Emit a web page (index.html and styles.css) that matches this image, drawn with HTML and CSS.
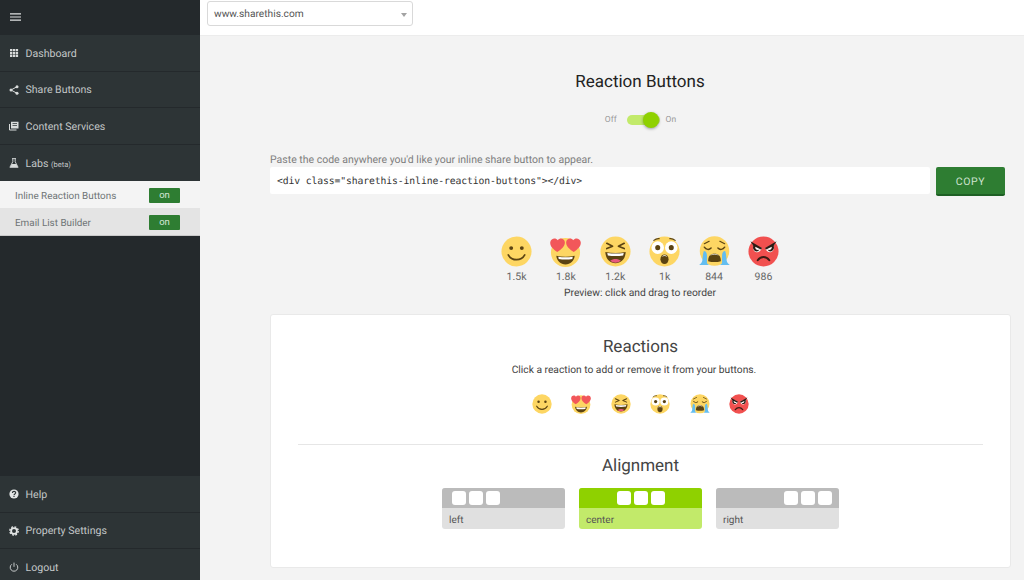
FILE: index.html
```html
<!DOCTYPE html>
<html lang="en">
<head>
<meta charset="utf-8">
<title>Reaction Buttons</title>
<link rel="stylesheet" href="styles.css">
</head>
<body>
<svg class="defs" width="0" height="0" aria-hidden="true">
  <defs>
    <symbol id="e-smile" viewBox="0 0 32 32">
      <circle cx="16" cy="16" r="15.500" fill="#fdd663"/>
      <circle cx="10.500" cy="12.500" r="2" fill="#5b4312"/>
      <circle cx="21.500" cy="12.500" r="2" fill="#5b4312"/>
      <path d="M7.500 19.500c2 3.600 4.900 5 8.500 5s6.500-1.400 8.500-5" fill="none" stroke="#5b4312" stroke-width="1.800" stroke-linecap="round"/>
    </symbol>
    <symbol id="e-love" viewBox="0 0 32 32">
      <circle cx="16" cy="17" r="15" fill="#fdd663"/>
      <path d="M7.500 16.500C3 13.500-.3 10.300.3 6.300 1 2.300 6 1.300 8 4.500c2-3.200 6.800-2.200 7.300 1.800.4 4-3.300 7.200-7.800 10.200z" fill="#f2575a"/>
      <path d="M24.500 16.500c-4.500-3-8.200-6.200-7.800-10.200.5-4 5.300-5 7.300-1.800 2-3.200 7-2.200 7.700 1.800.6 4-2.700 7.200-7.200 10.200z" fill="#f2575a"/>
      <path d="M6.500 20.500c6 1.300 13 1.300 19 0-.5 5.500-4.500 9-9.500 9s-9-3.500-9.500-9z" fill="#5b4312"/>
      <path d="M8.500 21.300c5 .8 10 .8 15 0l-.5 2.500c-4.500.7-9.500.7-14 0z" fill="#fff"/>
    </symbol>
    <symbol id="e-laugh" viewBox="0 0 32 32">
      <circle cx="16" cy="16" r="15.500" fill="#fdd663"/>
      <path d="M7 7.500l6 3-6 2.500M25 7.500l-6 3 6 2.500" fill="none" stroke="#5b4312" stroke-width="1.700" stroke-linecap="round" stroke-linejoin="round"/>
      <path d="M5.500 16.500c7 1.500 14 1.500 21 0-.3 7.500-4.800 11.500-10.500 11.500S5.800 24 5.500 16.500z" fill="#5b4312"/>
      <path d="M7.500 17.500c5.500.8 11.500.8 17 0l-.6 2.600c-5 .7-10.800.7-15.800 0z" fill="#fff"/>
      <path d="M10.500 25.500c3-2.200 8-2.200 11 0-3 2.700-8 2.700-11 0z" fill="#e8587c"/>
    </symbol>
    <symbol id="e-wow" viewBox="0 0 32 32">
      <circle cx="16" cy="16" r="15.500" fill="#fdd663"/>
      <path d="M5 4.500c1.500-1.300 3.500-2 5.500-1.800M27 4.500c-1.500-1.300-3.500-2-5.500-1.800" fill="none" stroke="#5b4312" stroke-width="1.200" stroke-linecap="round"/>
      <circle cx="9" cy="12" r="6.500" fill="#fff"/>
      <circle cx="23" cy="12" r="6.500" fill="#fff"/>
      <circle cx="9" cy="12" r="2.600" fill="#5b4312"/>
      <circle cx="23" cy="12" r="2.600" fill="#5b4312"/>
      <ellipse cx="16" cy="24" rx="4.200" ry="5" fill="#5b4312"/>
      <path d="M13 21.500c2-1.200 4-1.200 6 0-1.600-2.300-4.400-2.300-6 0z" fill="#fff"/>
    </symbol>
    <symbol id="e-cry" viewBox="0 0 32 32">
      <circle cx="16" cy="15.500" r="15.200" fill="#fdd663"/>
      <path d="M5.500 8l5-2.500M26.500 8l-5-2.500" fill="none" stroke="#5b4312" stroke-width="1.200" stroke-linecap="round"/>
      <path d="M5.500 11.500c1.800 2.800 5 3 7 1M26.500 11.500c-1.800 2.800-5 3-7 1" fill="none" stroke="#5b4312" stroke-width="1.500" stroke-linecap="round"/>
      <path d="M9.500 26c-.4-5 2.600-8 6.500-8s6.900 3 6.500 8c-4 1.200-9 1.200-13 0z" fill="#5b4312"/>
      <path d="M11.500 20.500c2.800-1.700 6.200-1.700 9 0-2-3-7-3-9 0z" fill="#fff"/>
      <path d="M5 15.500c2 0 3.200 2 3.200 5v6.500c0 1.500 1 2 2.300 3H.2c1.700-1.500 3-2.500 3.300-5 .4-3 .3-6.700 1.500-9.500z" fill="#63bdf0"/>
      <path d="M27 15.500c-2 0-3.200 2-3.200 5v6.500c0 1.500-1 2-2.300 3h10.300c-1.700-1.500-3-2.500-3.300-5-.4-3-.3-6.700-1.500-9.500z" fill="#63bdf0"/>
    </symbol>
    <symbol id="e-angry" viewBox="0 0 32 32">
      <circle cx="16" cy="16" r="15.500" fill="#f1504f"/>
      <path d="M3.500 7l10.500 5.500c-.5 3-2.500 4.500-5 4.200C6 16.300 4.500 13 5.500 10z" fill="#fff"/>
      <path d="M28.500 7L18 12.500c.5 3 2.500 4.500 5 4.200 3-.4 4.500-3.700 3.500-6.700z" fill="#fff"/>
      <path d="M2.500 5.500l12 6.800-1.200 1.600-5.800-2.900c-.6 2.700 2.900 4.500 4.400 2.800-.6 2.200-3.500 2.800-5.300 1.200-1.400-1.200-1.700-3-1.200-5z" fill="#2a1b14"/>
      <path d="M29.500 5.500l-12 6.800 1.200 1.600 5.800-2.900c.6 2.700-2.900 4.500-4.400 2.800.6 2.200 3.500 2.800 5.300 1.200 1.400-1.200 1.700-3 1.200-5z" fill="#2a1b14"/>
      <path d="M10 25c3.200-4.500 8.800-4.500 12 0" fill="none" stroke="#3b1c14" stroke-width="2" stroke-linecap="round"/>
    </symbol>
  </defs>
</svg>

<div class="app">
  <aside class="sidebar">
    <div class="side-top">
      <svg class="ico-menu" viewBox="0 0 11 8"><path d="M0 .8h11M0 4h11M0 7.200h11" stroke="#dfe2e2" stroke-width="1.200"/></svg>
    </div>
    <a class="nav-row">
      <svg class="ico" viewBox="0 0 10 10"><path fill="#d8dbdb" d="M1 1h2.300v2.300H1zM3.900 1h2.300v2.300H3.900zM6.800 1h2.300v2.300H6.800zM1 3.900h2.300v2.300H1zM3.900 3.900h2.300v2.300H3.900zM6.800 3.900h2.300v2.300H6.800zM1 6.800h2.300v2.300H1zM3.900 6.800h2.300v2.300H3.900zM6.800 6.800h2.300v2.300H6.800z"/></svg>
      <span>Dashboard</span>
    </a>
    <a class="nav-row">
      <svg class="ico" viewBox="0 0 10 10"><path d="M8 1.700L2 5l6 3.300" fill="none" stroke="#d8dbdb" stroke-width="1"/><circle cx="8" cy="1.700" r="1.500" fill="#d8dbdb"/><circle cx="2" cy="5" r="1.500" fill="#d8dbdb"/><circle cx="8" cy="8.300" r="1.500" fill="#d8dbdb"/></svg>
      <span>Share Buttons</span>
    </a>
    <a class="nav-row">
      <svg class="ico" viewBox="0 0 10 10"><path d="M.5 3v6h7" fill="none" stroke="#d8dbdb" stroke-width="1"/><path fill="#d8dbdb" fill-rule="evenodd" d="M2 .8h7.500v6.700H2zM3.500 2.300v.8h4.500v-.8zM3.500 4v.8h4.500V4z"/></svg>
      <span>Content Services</span>
    </a>
    <a class="nav-row nav-labs">
      <svg class="ico" viewBox="0 0 10 10"><path d="M3 .6h4M3.800.6v3.100L.9 9.300h8.200L6.200 3.700V.6" fill="none" stroke="#d8dbdb" stroke-width=".9"/><path d="M2.700 6h4.600l1.500 3.200H1.200z" fill="#d8dbdb"/></svg>
      <span>Labs <small>(beta)</small></span>
    </a>
    <div class="sub-row">
      <span>Inline Reaction Buttons</span>
      <b class="pill">on</b>
    </div>
    <div class="sub-row sub-alt">
      <span>Email List Builder</span>
      <b class="pill">on</b>
    </div>
    <div class="side-space"></div>
    <a class="nav-row">
      <svg class="ico" viewBox="0 0 10 10"><circle cx="5" cy="5" r="4.600" fill="#e2e5e5"/><path d="M3.400 3.900c0-2 3.300-2 3.300-.1 0 1.200-1.700 1.200-1.700 2.400" fill="none" stroke="#2d3436" stroke-width="1.100"/><path d="M4.400 6.900h1.200v1.200H4.400z" fill="#2d3436"/></svg>
      <span>Help</span>
    </a>
    <a class="nav-row">
      <svg class="ico" viewBox="0 0 10 10"><circle cx="5" cy="5" r="2.900" fill="none" stroke="#e2e5e5" stroke-width="1.800"/><circle cx="5" cy="5" r="4.200" fill="none" stroke="#e2e5e5" stroke-width="1.400" stroke-dasharray="1.800 1.500"/></svg>
      <span>Property Settings</span>
    </a>
    <a class="nav-row">
      <svg class="ico" viewBox="0 0 10 10"><path d="M2.800 2.300a3.800 3.800 0 1 0 4.400 0" fill="none" stroke="#d8dbdb" stroke-width=".9"/><path d="M5 .6v4.200" stroke="#d8dbdb" stroke-width=".9"/></svg>
      <span>Logout</span>
    </a>
  </aside>

  <main class="main">
    <header class="topbar">
      <div class="select">
        <span>www.sharethis.com</span>
        <i class="caret"></i>
      </div>
    </header>

    <section class="content">
      <h1 class="title">Reaction Buttons</h1>

      <div class="toggle-row">
        <span>Off</span>
        <div class="toggle"><i class="knob"></i></div>
        <span>On</span>
      </div>

      <p class="hint">Paste the code anywhere you'd like your inline share button to appear.</p>
      <div class="code-row">
        <code class="code">&lt;div class="sharethis-inline-reaction-buttons"&gt;&lt;/div&gt;</code>
        <button class="copy">COPY</button>
      </div>

      <div class="preview">
        <div class="react"><svg class="emoji-lg"><use href="#e-smile"/></svg><span>1.5k</span></div>
        <div class="react"><svg class="emoji-lg"><use href="#e-love"/></svg><span>1.8k</span></div>
        <div class="react"><svg class="emoji-lg"><use href="#e-laugh"/></svg><span>1.2k</span></div>
        <div class="react"><svg class="emoji-lg"><use href="#e-wow"/></svg><span>1k</span></div>
        <div class="react"><svg class="emoji-lg"><use href="#e-cry"/></svg><span>844</span></div>
        <div class="react"><svg class="emoji-lg"><use href="#e-angry"/></svg><span>986</span></div>
      </div>
      <p class="preview-note">Preview: click and drag to reorder</p>

      <div class="card">
        <h2 class="card-title">Reactions</h2>
        <p class="card-sub">Click a reaction to add or remove it from your buttons.</p>
        <div class="picker">
          <svg class="emoji-sm"><use href="#e-smile"/></svg>
          <svg class="emoji-sm"><use href="#e-love"/></svg>
          <svg class="emoji-sm"><use href="#e-laugh"/></svg>
          <svg class="emoji-sm"><use href="#e-wow"/></svg>
          <svg class="emoji-sm"><use href="#e-cry"/></svg>
          <svg class="emoji-sm"><use href="#e-angry"/></svg>
        </div>
        <hr class="rule">
        <h2 class="card-title align-title">Alignment</h2>
        <div class="aligns">
          <div class="align">
            <div class="align-top"><i></i><i></i><i></i></div>
            <div class="align-label">left</div>
          </div>
          <div class="align align-on">
            <div class="align-top top-center"><i></i><i></i><i></i></div>
            <div class="align-label">center</div>
          </div>
          <div class="align">
            <div class="align-top top-right"><i></i><i></i><i></i></div>
            <div class="align-label">right</div>
          </div>
        </div>
      </div>
    </section>
  </main>
</div>
</body>
</html>
```

FILE: styles.css
```css
* { box-sizing: border-box; }

html, body {
  margin: 0;
  height: 580px;
  overflow: hidden;
}

body {
  font-family: Roboto, "Liberation Sans", sans-serif;
  background: #f3f3f3;
  color: #444;
  text-rendering: geometricPrecision;
}

.defs { position: absolute; }

.app {
  display: flex;
  width: 1024px;
  height: 580px;
  overflow: hidden;
}

/* Sidebar */
.sidebar {
  flex: 0 0 200px;
  display: flex;
  flex-direction: column;
  background: #24292c;
  overflow: hidden;
}

.side-top {
  flex: 0 0 35px;
  display: flex;
  align-items: center;
  padding-left: 10px;
}

.ico-menu { width: 11px; height: 8px; margin-top: -1px; }

.nav-row {
  flex: 0 0 36.5px;
  display: flex;
  align-items: center;
  gap: 6.500px;
  padding: .6px 0 0 9px;
  background: #2d3436;
  border-bottom: 1px solid #24292c;
  color: #c3c7c8;
  font-size: 10.600px;
}

.nav-labs { border-bottom: 0; }

.nav-row small { font-size: 7.500px; }

.ico { width: 10px; height: 10px; flex: none; }

.sub-row {
  flex: 0 0 27px;
  display: flex;
  align-items: center;
  justify-content: space-between;
  padding: 1px 20px 0 15px;
  background: #f4f4f4;
  color: #6f7476;
  font-size: 9.900px;
}

.sub-row span { padding-top: 2px; }

.sub-alt {
  flex-basis: 28px;
  background: #e4e4e4;
  border-bottom: 1px solid #c9c9c9;
}

.pill {
  width: 31px;
  height: 15px;
  border-radius: 1px;
  background: #2e7d32;
  color: #d7e8d8;
  font-size: 9.500px;
  font-weight: 400;
  line-height: 15px;
  text-align: center;
}

.side-space { flex: 0 0 240px; }

/* Main */
.main {
  flex: 1;
  display: flex;
  flex-direction: column;
  min-width: 0;
}

.topbar {
  flex: 0 0 36px;
  padding: 1px 0 0 7px;
  background: #fff;
  border-bottom: 1px solid #ececec;
}

.select {
  width: 206px;
  height: 25px;
  display: flex;
  align-items: center;
  justify-content: space-between;
  padding: 1px 5px 0 6px;
  background: #fff;
  border: 1px solid #d9d9d9;
  border-radius: 3px;
  color: #555;
  font-size: 10.200px;
}

.caret {
  width: 0;
  height: 0;
  margin: 2px 0 0;
  border-left: 3.500px solid transparent;
  border-right: 3.500px solid transparent;
  border-top: 4px solid #a3a3a3;
}

.content {
  flex: 1;
  padding: 0 13px 0 70px;
}

.title {
  margin: 36px 0 0;
  font-size: 17px;
  font-weight: 400;
  line-height: 21px;
  color: #222;
  text-align: center;
  padding-right: 1px;
}

.toggle-row {
  display: flex;
  align-items: center;
  justify-content: center;
  height: 18px;
  margin-top: 18px;
  color: #9a9a9a;
  font-size: 8.500px;
}

.toggle {
  position: relative;
  width: 33px;
  height: 10px;
  margin: 0 6px 0 10px;
  border-radius: 5px;
  background: #c2ea6a;
}

.knob {
  position: absolute;
  top: -3px;
  right: 1px;
  width: 16px;
  height: 16px;
  border-radius: 50%;
  background: #8fd100;
  box-shadow: 0 1px 3px rgba(0, 0, 0, .35);
}

.hint {
  margin: 24px 0 0;
  color: #7d7d7d;
  font-size: 10.500px;
  line-height: 14px;
}

.code-row {
  display: flex;
  gap: 6px;
  margin: 0 6px 0 0;
  align-items: flex-start;
}

.code {
  flex: 1;
  height: 27px;
  padding-left: 7px;
  background: #fff;
  border-radius: 2px;
  color: #333;
  font-family: "DejaVu Sans Mono", "Liberation Mono", monospace;
  font-size: 9.750px;
  letter-spacing: -.115px;
  line-height: 29px;
}

.copy {
  flex: 0 0 69px;
  height: 29px;
  padding: 1px 0 0;
  border: 0;
  border-bottom: 2px solid #1e5f24;
  border-radius: 2px;
  background: #2e7d32;
  color: #cfe3d0;
  font-family: inherit;
  font-size: 10.500px;
  letter-spacing: .6px;
  text-rendering: geometricPrecision;
}

.preview {
  display: flex;
  justify-content: center;
  margin-top: 40px;
  padding-right: 1px;
}

.react {
  flex: 0 0 49.400px;
  display: flex;
  flex-direction: column;
  align-items: center;
  color: #666;
  font-size: 10.500px;
  line-height: 14px;
}

.emoji-lg { width: 31px; height: 31px; margin-bottom: 3px; }

.preview-note {
  margin: 2px 0 0;
  color: #444;
  font-size: 10.300px;
  line-height: 14px;
  text-align: center;
  padding-right: 1px;
}

.card {
  height: 254px;
  margin-top: 14px;
  padding: 22px 27px 0;
  background: #fff;
  border: 1px solid #e9e9e9;
  border-radius: 3px;
  text-align: center;
}

.card-title {
  margin: 0;
  color: #444;
  font-size: 17px;
  font-weight: 400;
  line-height: 20px;
}

.card-sub {
  margin: 6px 0 0;
  padding-right: 13px;
  color: #444;
  font-size: 10.250px;
  line-height: 14px;
}

.picker {
  display: flex;
  justify-content: center;
  margin-top: 17px;
}

.emoji-sm { width: 20px; height: 20px; margin: 0 9.700px; flex: none; }

.rule {
  margin: 30px 0 0;
  border: 0;
  border-top: 1px solid #e6e6e6;
}

.align-title { margin-top: 11px; }

.aligns {
  display: flex;
  justify-content: center;
  gap: 14px;
  margin-top: 12px;
}

.align {
  width: 123px;
  height: 41px;
  border-radius: 3px;
  overflow: hidden;
  background: #e0e0e0;
  text-align: left;
}

.align-top {
  display: flex;
  gap: 3px;
  height: 20px;
  padding: 3px 10px;
  background: #bbb;
}

.align-top i {
  width: 14px;
  height: 14px;
  border-radius: 3px;
  background: #fff;
}

.top-center { justify-content: center; }
.top-right { justify-content: flex-end; padding: 3px 7px; }

.align-label {
  padding-left: 7px;
  color: #555;
  font-size: 10px;
  line-height: 26px;
}

.align-on { background: #c2ea6a; }
.align-on .align-top { background: #8fd100; }
```
